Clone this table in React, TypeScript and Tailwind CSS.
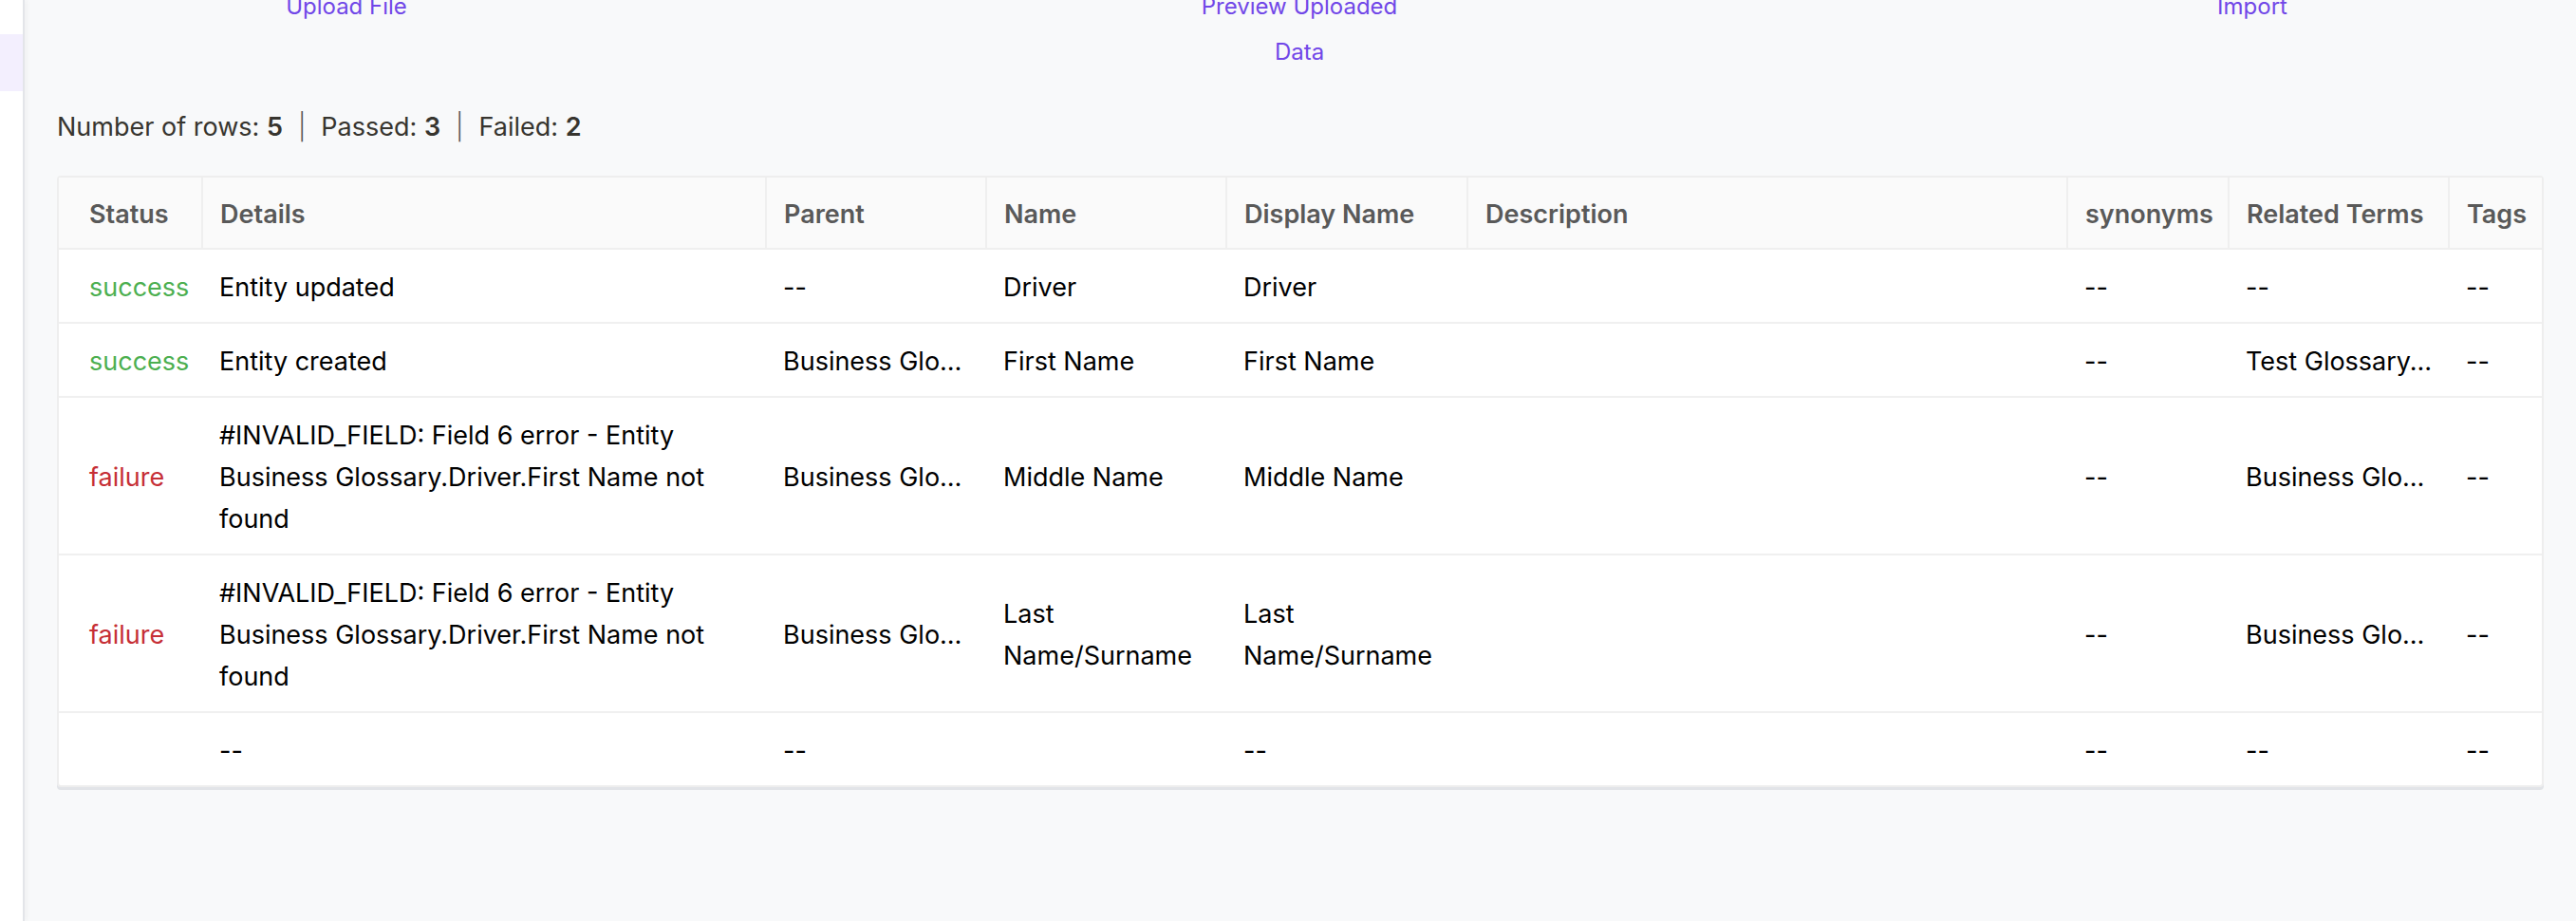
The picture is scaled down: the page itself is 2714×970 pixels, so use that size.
import React from "react";

type Row = {
  status: "success" | "failure" | "";
  details: string;
  parent: string;
  name: string;
  display: string;
  description: string;
  synonyms: string;
  related: string;
  tags: string;
};

const rows: Row[] = [
  { status: "success", details: "Entity updated", parent: "--", name: "Driver", display: "Driver", description: "", synonyms: "--", related: "--", tags: "--" },
  { status: "success", details: "Entity created", parent: "Business Glossary.Driver", name: "First Name", display: "First Name", description: "", synonyms: "--", related: "Test Glossary.Term", tags: "--" },
  { status: "failure", details: "#INVALID_FIELD: Field 6 error - Entity Business Glossary.Driver.First Name not found", parent: "Business Glossary.Driver.First Name", name: "Middle Name", display: "Middle Name", description: "", synonyms: "--", related: "Business Glossary.Driver", tags: "--" },
  { status: "failure", details: "#INVALID_FIELD: Field 6 error - Entity Business Glossary.Driver.First Name not found", parent: "Business Glossary.Driver.First Name", name: "Last Name/Surname", display: "Last Name/Surname", description: "", synonyms: "--", related: "Business Glossary.Driver", tags: "--" },
  { status: "", details: "--", parent: "--", name: "", display: "--", description: "", synonyms: "--", related: "--", tags: "--" },
];

const headers = ["Status", "Details", "Parent", "Name", "Display Name", "Description", "synonyms", "Related Terms", "Tags"];

export default function App() {
  return (
    <div className="flex w-[2714px] h-[970px] overflow-hidden bg-[#f8f9fa] font-['Inter','Noto_Sans',sans-serif]">
      <aside className="w-[26px] shrink-0 bg-white border-r-2 border-[#e3e5e9] pt-[36px] shadow-[2px_0_6px_rgba(0,0,0,0.04)]">
        <div className="h-[60px] bg-[#f3effe]" />
      </aside>
      <main className="flex-1 px-[34px]">
        <div className="-mt-[17px] flex pl-[185px] gap-[764px] text-[24px] leading-[48px] text-[#7147e8]">
          <div className="w-[240px] shrink-0 text-center">Upload File</div>
          <div className="w-[240px] shrink-0 text-center">Preview Uploaded Data</div>
          <div className="w-[240px] shrink-0 text-center">Import</div>
        </div>
        <div className="mt-[37px] text-[27px] leading-[36px] text-[#37352f]">
          Number of rows: <span className="font-semibold">5</span>
          <span className="mx-[16px] font-light text-[#555]">|</span>
          Passed: <span className="font-semibold">3</span>
          <span className="mx-[16px] font-light text-[#555]">|</span>
          Failed: <span className="font-semibold">2</span>
        </div>
        <div className="mt-[33px] border-2 border-[#eeeeee] rounded-[4px] bg-white shadow-[0_3px_0_#e2e4e8]">
          <table className="w-full table-fixed border-collapse text-[27px] leading-[44px] text-black">
            <colgroup>
              <col className="w-[151px]" />
              <col className="w-[594px]" />
              <col className="w-[232px]" />
              <col className="w-[253px]" />
              <col className="w-[254px]" />
              <col className="w-[632px]" />
              <col className="w-[170px]" />
              <col className="w-[232px]" />
              <col />
            </colgroup>
            <thead>
              <tr className="bg-[#fafafa]">
                {headers.map((h, i) => (
                  <th
                    key={h}
                    className={
                      "text-left font-semibold text-[#595959] pt-[17px] pb-[13px] border-b-2 border-[#efefef] whitespace-nowrap " +
                      (i === 0 ? "pl-[32px] pr-[10px] " : "px-[18px] ") +
                      (i < headers.length - 1 ? "border-r-2" : "")
                    }
                  >
                    {h}
                  </th>
                ))}
              </tr>
            </thead>
            <tbody>
              {rows.map((r, idx) => (
                <tr key={idx} className="border-b-2 border-[#f0f0f0] last:border-b-0">
                  <td className={"pl-[32px] pr-[10px] pt-[18px] pb-[14px] align-middle " + (r.status === "success" ? "text-[#4caf50]" : "text-[#c62f36]")}>
                    {r.status}
                  </td>
                  <td className="px-[18px] pt-[18px] pb-[14px] align-middle">{r.details}</td>
                  <td className="px-[18px] pt-[18px] pb-[14px] align-middle truncate">{r.parent}</td>
                  <td className="px-[18px] pt-[18px] pb-[14px] align-middle">{r.name}</td>
                  <td className="px-[18px] pt-[18px] pb-[14px] align-middle">{r.display}</td>
                  <td className="px-[18px] pt-[18px] pb-[14px] align-middle">{r.description}</td>
                  <td className="px-[18px] pt-[18px] pb-[14px] align-middle">{r.synonyms}</td>
                  <td className="pl-[18px] pr-[12px] pt-[18px] pb-[14px] align-middle truncate">{r.related}</td>
                  <td className="px-[18px] pt-[18px] pb-[14px] align-middle">{r.tags}</td>
                </tr>
              ))}
            </tbody>
          </table>
        </div>
      </main>
    </div>
  );
}
